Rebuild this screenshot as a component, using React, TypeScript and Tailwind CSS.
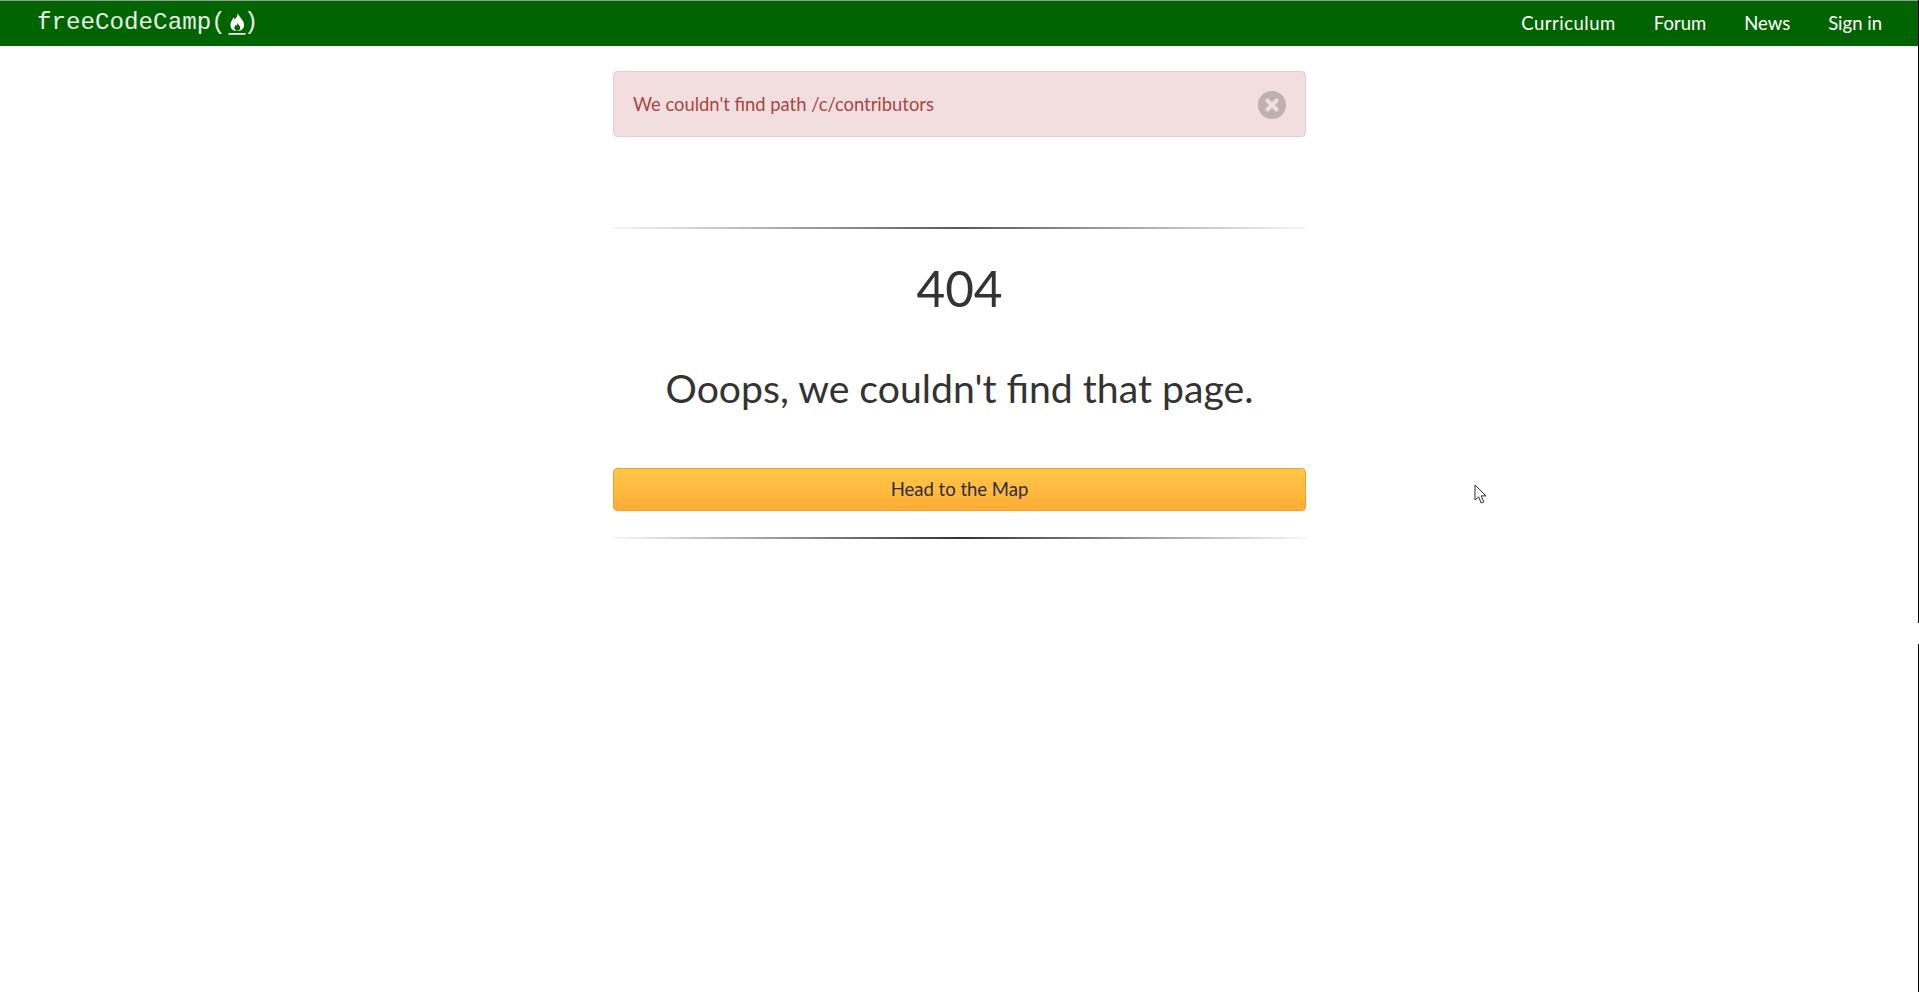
function FadeRule({ strong }: { strong?: boolean }) {
  return (
    <div
      className={
        strong
          ? 'h-[2px] w-full bg-[linear-gradient(to_right,rgba(0,0,0,0.03),rgba(0,0,0,0.8),rgba(0,0,0,0.03))]'
          : 'h-[2px] w-full bg-[linear-gradient(to_right,rgba(0,0,0,0.03),rgba(0,0,0,0.65),rgba(0,0,0,0.03))]'
      }
    ></div>
  );
}

function Logo() {
  return (
    <a className="flex items-center font-['Liberation_Mono',monospace] text-[24.2px] leading-none text-white/90">
      <span>freeCodeCamp(</span>
      <svg viewBox="0 0 20 24" className="ml-px h-[25px] w-[20px]" fill="#fff">
        <path
          fillRule="evenodd"
          d="M10.500 1c.8 3.200-1.400 5-2.900 7-.3-.9-.8-1.600-1.600-2.200.3 2.400-2.600 4.100-2.600 7.900 0 3 1.900 4.900 4.200 5.600h5.200c2.400-.8 4.300-2.900 4.300-5.800 0-5.300-5.100-7.500-6.600-12.500zM10.300 11c.3 1.600 2.900 3 2.900 5.600 0 1.500-1 2.500-2.800 2.500-1.900 0-3-1.100-3-2.600 0-1.500 1-2.200 1.600-3.400.4.500.6 1 .6 1.500.7-1 .9-2.200.7-3.600z"
        />
        <rect x="1.500" y="21.500" width="17" height="1.700" />
      </svg>
      <span className="-ml-[3px]">)</span>
    </a>
  );
}

export default function App() {
  return (
    <div className="relative min-h-[992px] bg-white font-['Lato',sans-serif] text-[#333]">
      <header className="flex h-[46px] items-center justify-between border-t border-t-[#999] bg-[#006400] pl-[37px] pr-[37px]">
        <Logo />
        <nav className="flex items-center gap-[38px] text-[18.5px] text-white">
          <a className="tracking-[0.5px]">Curriculum</a>
          <a>Forum</a>
          <a>News</a>
          <a>Sign in</a>
        </nav>
      </header>

      <main className="mx-auto flex w-[693px] flex-col items-center pt-[25px]">
        <div className="flex h-[66px] w-full items-center justify-between rounded border border-[#ebccd1] bg-[#f2dede] pl-[19px] pr-[19px] text-[18.4px] text-[#a94442]">
          <span className="mt-px">We couldn't find path /c/contributors</span>
          <span className="mt-[2px] flex h-[28px] w-[28px] items-center justify-center rounded-full bg-[#bfb0b1]">
            <svg viewBox="0 0 16 16" className="h-[16px] w-[16px]" stroke="#f2dede" strokeWidth="4" strokeLinecap="round">
              <path d="M3.500 3.500l9 9M12.500 3.500l-9 9" />
            </svg>
          </span>
        </div>

        <div className="mt-[90px] w-full"><FadeRule /></div>

        <h1 className="mt-[29px] text-[49.500px] leading-[60px]">404</h1>
        <h2 className="mt-[48px] text-[39.200px] leading-[44px]">Ooops, we couldn't find that page.</h2>

        <button className="mt-[58px] h-[43px] w-full rounded border border-[#f1a02a] bg-[linear-gradient(#ffc84a,#ffac33)] text-[18.500px] text-[#2a2d45]">
          Head to the Map
        </button>

        <div className="mt-[26px] w-full"><FadeRule strong /></div>
      </main>

      {/* mouse pointer left in the capture */}
      <svg viewBox="0 0 14 22" className="absolute left-[1474px] top-[484px] h-[22px] w-[14px]" fill="#fff" stroke="#2a2a3a" strokeWidth="1">
        <path d="M1 1v15l3.600-3.200 2.600 6.200 2.600-1.100-2.600-6h4.800z" />
      </svg>

      {/* window edge */}
      <div className="absolute right-0 top-0 h-[623px] w-px bg-black"></div>
      <div className="absolute right-0 top-[644px] h-[348px] w-px bg-black"></div>
    </div>
  );
}
